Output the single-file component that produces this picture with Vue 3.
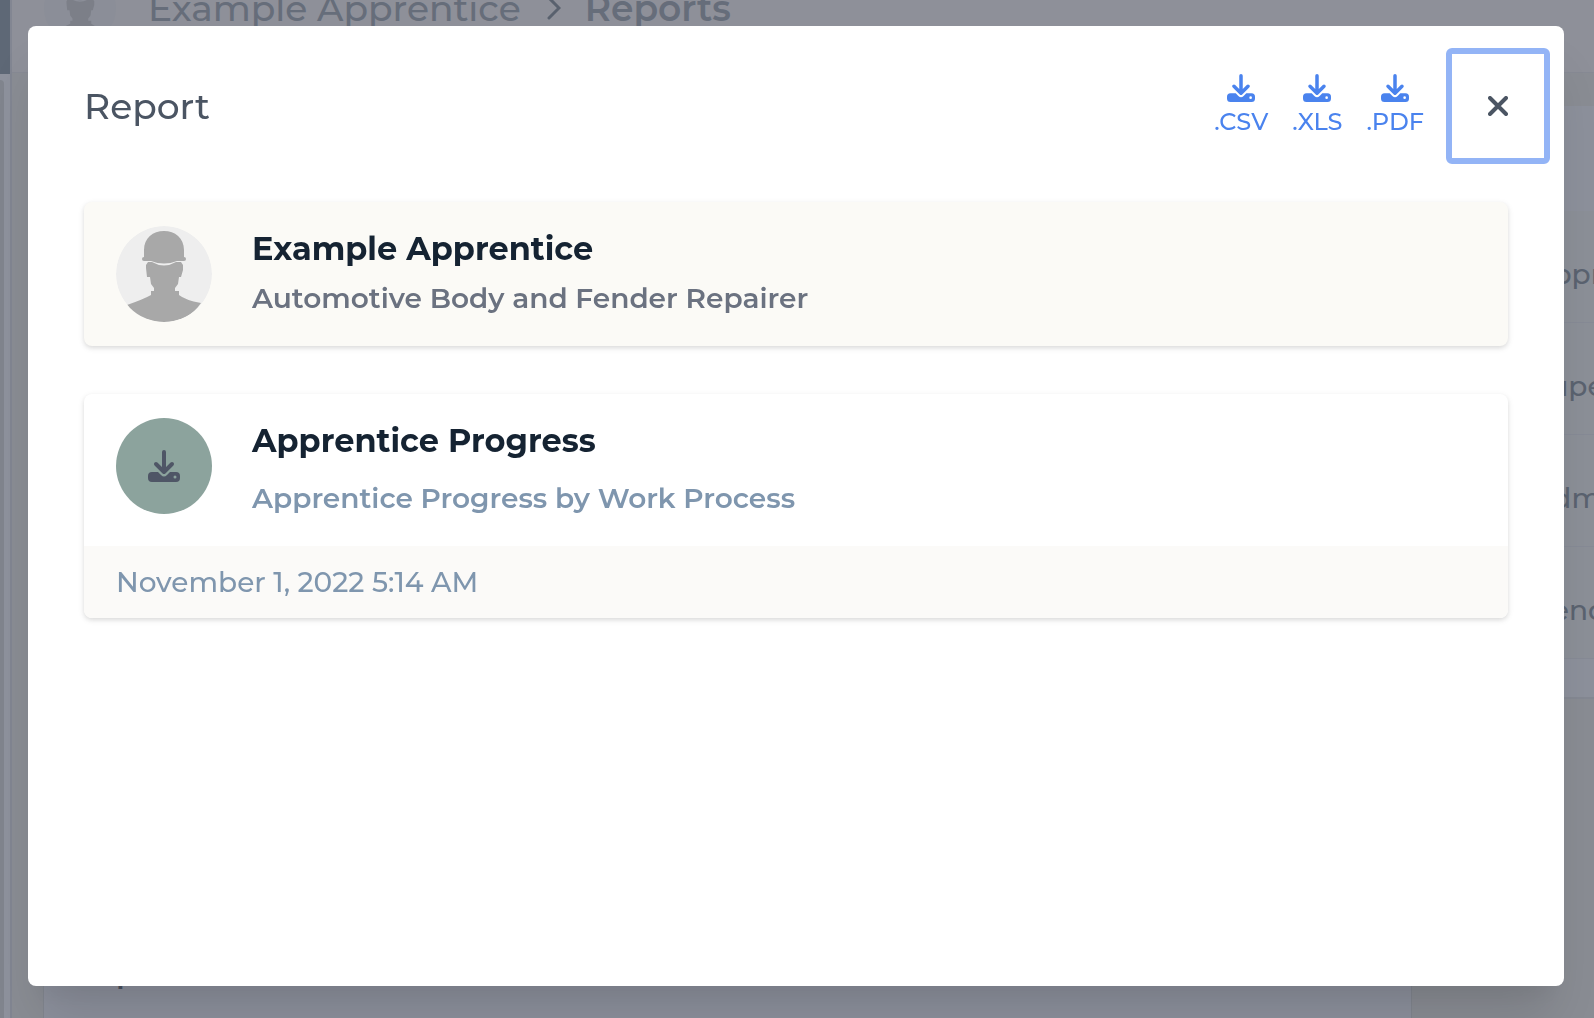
<template>
  <div class="page">
    <div class="rail">
      <div class="rail-top"></div>
      <div class="rail-body"></div>
    </div>
    <main class="main">
      <nav class="crumbs" aria-label="Breadcrumb">
        <svg class="crumb-avatar" viewBox="0 0 96 96" aria-hidden="true">
          <circle cx="48" cy="48" r="48" class="dim-disc" />
          <path :d="workerPath" class="dim-figure" />
        </svg>
        <span>Example Apprentice</span>
        <svg class="chevron" viewBox="0 0 14 24" aria-hidden="true">
          <path d="M2 2l10 10-10 10" />
        </svg>
        <strong>Reports</strong>
      </nav>
      <section class="roles">
        <div class="roles-head"></div>
        <div v-for="role in roles" :key="role" class="role-row">
          <span class="role-name">{{ role }}</span>
        </div>
        <div class="roles-foot"></div>
      </section>
      <section class="panel">
        <h3>Reports</h3>
      </section>
    </main>
  </div>

  <div v-if="open" class="overlay">
    <div class="modal" role="dialog" aria-modal="true" aria-labelledby="modal-title">
      <header class="modal-header">
        <h1 id="modal-title">Report</h1>
        <div class="actions">
          <a v-for="format in formats" :key="format" href="#" class="download">
            <svg viewBox="0 0 32 32" aria-hidden="true">
              <path class="arrow" d="M16 2v19M8 14l8 8 8-8" />
              <path class="tray" :d="trayPath" />
            </svg>
            <span>.{{ format }}</span>
          </a>
        </div>
        <button class="close" type="button" aria-label="Close" @click="open = false">
          <svg viewBox="0 0 20 20" aria-hidden="true">
            <path d="M2 2l16 16M18 2L2 18" />
          </svg>
        </button>
      </header>

      <div class="modal-body">
        <article class="card person">
          <div class="card-main">
            <svg class="avatar" viewBox="0 0 96 96" aria-hidden="true">
              <circle cx="48" cy="48" r="48" fill="#eeeeee" />
              <path :d="workerPath" fill="#a8a8a8" />
            </svg>
            <div class="card-text">
              <h2>Example Apprentice</h2>
              <p class="trade">Automotive Body and Fender Repairer</p>
            </div>
          </div>
        </article>

        <article class="card">
          <div class="card-main progress">
            <div class="badge">
              <svg viewBox="0 0 32 32" aria-hidden="true">
                <path class="arrow" d="M16 2v19M8 14l8 8 8-8" />
                <path class="tray" :d="trayPath" />
              </svg>
            </div>
            <div class="card-text spaced">
              <h2>Apprentice Progress</h2>
              <p class="summary">Apprentice Progress by Work Process</p>
            </div>
          </div>
          <footer class="card-footer">
            <time datetime="2022-11-01T05:14">November 1, 2022 5:14 AM</time>
          </footer>
        </article>
      </div>
    </div>
  </div>
</template>

<script setup>
import { ref } from 'vue'

const open = ref(true)
const formats = ['CSV', 'XLS', 'PDF']
const roles = ['Apprentice', 'Supervisor', 'Admin', 'Pending']

// Drive tray with the notch under the arrow and the small light on the right
const trayPath =
  'M4 22h6l3 3q3 3 6 0l3-3h6a4 4 0 0 1 4 4v2a4 4 0 0 1-4 4H4a4 4 0 0 1-4-4v-2a4 4 0 0 1 4-4z' +
  'M27 25.5a1.5 1.5 0 1 0 0 3a1.5 1.5 0 1 0 0-3z'

// Hard hat, then face, neck and shoulders
const workerPath =
  'M28 31V24C28 12 37 5 48 5s20 7 20 19v7q2 0 2 2t-2 2h-7q-13 5-26 0h-7q-2 0-2-2t2-2z' +
  'M32 36h4q12 7 24 0h5l2 3v5l-2 7h-2l-1 7-3 4v3h4v4q6 5 22 8' +
  'C77 89 64 96 48 96S18 90 11 79q17-6 24-10v-4h3v-3l-3-4-1-7h-3l-1-9v-3z'
</script>

<style>
html,
body {
  margin: 0;
}
</style>

<style scoped>
* {
  box-sizing: border-box;
}

h1,
h2,
h3,
p {
  margin: 0;
}

.page,
.overlay {
  font-family: Montserrat, Inter, "Liberation Sans", sans-serif;
}

.page {
  display: flex;
  height: 100vh;
  overflow: hidden;
  background: #8a8d94;
}

.rail {
  display: flex;
  flex-direction: column;
  width: 12px;
  background: #8e929d;
  border-right: 2px solid #828692;
}

.rail-top {
  height: 74px;
  background: #5e6876;
}

.rail-body {
  flex: 1;
  width: 4px;
  margin-top: 6px;
  background: #81858e;
  border-top-right-radius: 4px;
}

/* The page behind the dialog is scrolled down a little */
.main {
  display: flex;
  flex: 1;
  flex-direction: column;
  min-width: 0;
  margin-top: -56px;
}

.crumbs {
  display: flex;
  flex: none;
  align-items: center;
  height: 129px;
  padding-left: 32px;
  background: #8e9099;
  border-bottom: 1px solid #878a94;
  color: #666d7a;
  font-size: 36px;
  font-weight: 500;
}

.crumb-avatar {
  width: 72px;
  height: 72px;
  margin-right: 32px;
}

.dim-disc {
  fill: #8b8e98;
}

.dim-figure {
  fill: #7c7f88;
}

.chevron {
  width: 14px;
  height: 24px;
  margin: 0 24px 0 26px;
  fill: none;
  stroke: #59616e;
  stroke-width: 3;
  stroke-linecap: round;
}

.crumbs strong {
  font-weight: 600;
}

.roles {
  flex: none;
  margin-top: 33px;
  margin-left: 31px;
  background: #8d919c;
  border-bottom: 2px solid #858993;
}

.roles-head {
  height: 105px;
}

.role-row {
  display: flex;
  justify-content: flex-end;
  align-items: center;
  height: 112px;
  padding-top: 14px;
  background: #8c9098;
  border-bottom: 1px solid #878b96;
}

.role-name {
  width: 62px;
  color: #5b6370;
  font-size: 28px;
  font-weight: 500;
  white-space: nowrap;
}

.roles-foot {
  height: 38px;
}

.panel {
  flex: 1;
  margin: 224px 182px 0 31px;
  padding: 36px 40px;
  background: #8d919d;
  border: 1px solid #82868f;
}

.panel h3 {
  color: #4b5260;
  font-size: 24px;
  line-height: 32px;
}

.overlay {
  position: fixed;
  inset: 0;
  display: flex;
  padding: 26px 30px 32px 28px;
}

.modal {
  flex: 1;
  background: #ffffff;
  border-radius: 8px;
  box-shadow: 0 40px 50px -10px rgba(0, 0, 0, 0.12), 0 20px 20px -10px rgba(0, 0, 0, 0.04);
}

.modal-header {
  display: flex;
  align-items: center;
  height: 160px;
  padding: 0 14px 0 56px;
}

.modal-header h1 {
  flex: 1;
  color: #4b5563;
  font-size: 36px;
  font-weight: 500;
  line-height: 48px;
}

.actions {
  display: flex;
  gap: 24px;
  margin-right: 22px;
}

.download {
  display: flex;
  flex-direction: column;
  align-items: center;
  gap: 4px;
  color: #4a83ee;
  font-size: 24px;
  font-weight: 500;
  line-height: 32px;
  text-decoration: none;
}

.download svg {
  width: 28px;
  height: 28px;
}

.arrow {
  fill: none;
  stroke: currentColor;
  stroke-width: 4;
  stroke-linecap: round;
  stroke-linejoin: round;
}

.tray {
  fill: currentColor;
  fill-rule: evenodd;
}

.close {
  display: flex;
  align-items: center;
  justify-content: center;
  width: 104px;
  height: 116px;
  padding: 0;
  background: none;
  border: 6px solid #93b4f6;
  border-radius: 6px;
  outline: none;
  color: #4b5563;
  cursor: pointer;
}

.close svg {
  width: 20px;
  height: 20px;
  fill: none;
  stroke: currentColor;
  stroke-width: 4;
  stroke-linecap: round;
}

.modal-body {
  display: flex;
  flex-direction: column;
  gap: 48px;
  padding: 16px 56px;
}

.card {
  overflow: hidden;
  background: #ffffff;
  border-radius: 8px;
  box-shadow: 0 2px 6px rgba(0, 0, 0, 0.1), 0 2px 4px rgba(0, 0, 0, 0.06);
}

.person {
  background: #fbfaf6;
}

.card-main {
  display: flex;
  gap: 40px;
  padding: 24px 32px;
}

.progress {
  padding-bottom: 28px;
}

.avatar,
.badge {
  flex: none;
  width: 96px;
  height: 96px;
  border-radius: 50%;
}

.avatar {
  overflow: hidden;
}

.badge {
  display: flex;
  align-items: center;
  justify-content: center;
  background: #8ca39d;
  color: #4f5666;
}

.badge svg {
  width: 32px;
  height: 32px;
}

.card-text {
  display: flex;
  flex-direction: column;
  gap: 6px;
}

.spaced {
  gap: 14px;
}

.card-text h2 {
  color: #152332;
  font-size: 32px;
  font-weight: 700;
  line-height: 46px;
}

.card-text p {
  font-size: 28px;
  font-weight: 600;
  line-height: 40px;
}

.trade {
  color: #6b7280;
}

.card-text .summary {
  color: #7f96ae;
}

.card-footer {
  padding: 16px 32px;
  background: #fbfaf8;
  color: #7f96ae;
  font-size: 28px;
  font-weight: 500;
  line-height: 40px;
}
</style>
